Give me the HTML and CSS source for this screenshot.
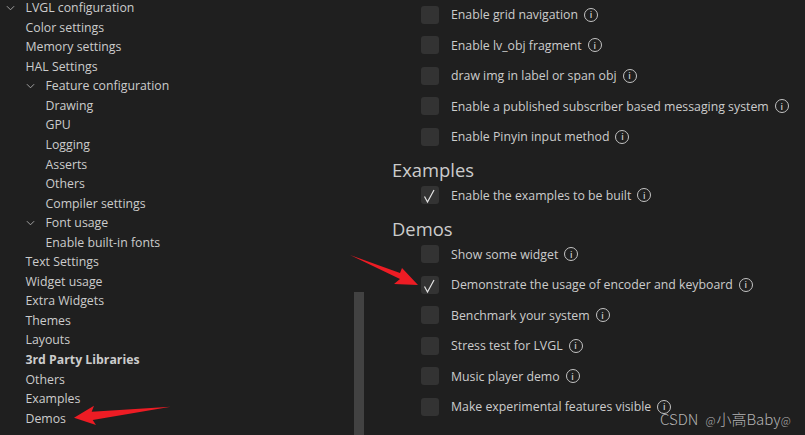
FILE: index.html
```html
<!DOCTYPE html>
<html lang="en">
<head>
    <meta charset="UTF-8">
    <title>LVGL configuration</title>
    <link rel="stylesheet" href="styles.css">
</head>
<body>
    <div class="page">
        <nav class="tree">
            <div class="row lvl1"><svg class="chev" viewBox="0 0 10 6"><path d="M1 1l4 4 4-4"/></svg>LVGL configuration</div>
            <div class="row lvl1">Color settings</div>
            <div class="row lvl1">Memory settings</div>
            <div class="row lvl1">HAL Settings</div>
            <div class="row lvl2"><svg class="chev" viewBox="0 0 10 6"><path d="M1 1l4 4 4-4"/></svg>Feature configuration</div>
            <div class="row lvl2">Drawing</div>
            <div class="row lvl2">GPU</div>
            <div class="row lvl2">Logging</div>
            <div class="row lvl2">Asserts</div>
            <div class="row lvl2">Others</div>
            <div class="row lvl2">Compiler settings</div>
            <div class="row lvl2"><svg class="chev" viewBox="0 0 10 6"><path d="M1 1l4 4 4-4"/></svg>Font usage</div>
            <div class="row lvl2">Enable built-in fonts</div>
            <div class="row lvl1">Text Settings</div>
            <div class="row lvl1">Widget usage</div>
            <div class="row lvl1">Extra Widgets</div>
            <div class="row lvl1">Themes</div>
            <div class="row lvl1">Layouts</div>
            <div class="row lvl1 active">3rd Party Libraries</div>
            <div class="row lvl1">Others</div>
            <div class="row lvl1">Examples</div>
            <div class="row lvl1">Demos</div>
            <div class="scrollbar"></div>
        </nav>
        <main class="settings">
            <div class="option"><span class="box"></span><span>Enable grid navigation</span><span class="info">i</span></div>
            <div class="option"><span class="box"></span><span>Enable lv_obj fragment</span><span class="info">i</span></div>
            <div class="option"><span class="box"></span><span>draw img in label or span obj</span><span class="info">i</span></div>
            <div class="option"><span class="box"></span><span>Enable a published subscriber based messaging system</span><span class="info">i</span></div>
            <div class="option"><span class="box"></span><span>Enable Pinyin input method</span><span class="info">i</span></div>

            <h2 class="first">Examples</h2>
            <div class="option"><span class="box"><svg class="tick" viewBox="0 0 18 18"><path d="M3.500 10.500l3 5.500 6.500-12"/></svg></span><span>Enable the examples to be built</span><span class="info">i</span></div>

            <h2>Demos</h2>
            <div class="option"><span class="box"></span><span>Show some widget</span><span class="info">i</span></div>
            <div class="option"><span class="box"><svg class="tick" viewBox="0 0 18 18"><path d="M3.500 10.500l3 5.500 6.500-12"/></svg></span><span>Demonstrate the usage of encoder and keyboard</span><span class="info">i</span></div>
            <div class="option"><span class="box"></span><span>Benchmark your system</span><span class="info">i</span></div>
            <div class="option"><span class="box"></span><span>Stress test for LVGL</span><span class="info">i</span></div>
            <div class="option"><span class="box"></span><span>Music player demo</span><span class="info">i</span></div>
            <div class="option"><span class="box"></span><span>Make experimental features visible</span><span class="info">i</span></div>
        </main>
    </div>

    <!-- annotations drawn over the screenshot -->
    <svg class="arrow arrow-tree" viewBox="0 0 105 30"><path d="M4 17.700L24 5.700l-2.300 6 79-5-78 13.300 3.300 5z"/></svg>
    <svg class="arrow arrow-demo" viewBox="0 0 100 50"><path d="M5 5l50 18 2-5 16 17-24-1 6-5z"/></svg>
    <div class="watermark">CSDN<span class="wm-small wm-at">@</span>小高Baby<span class="wm-small">@</span></div>
</body>
</html>
```

FILE: styles.css
```css
html, body {
    margin: 0;
    height: 100%;
    overflow: hidden;
    background-color: #1f1f1f;
}

body {
    position: relative;
    color: #cccccc;
    font-family: "Open Sans", "Noto Sans", sans-serif;
    font-size: 12.3px;
}

.page {
    display: flex;
    height: 435px;
}

.tree {
    position: relative;
    width: 392px;
    flex-shrink: 0;
    margin-top: -1.85px;
}

.row {
    position: relative;
    height: 19.55px;
    line-height: 19.55px;
    white-space: nowrap;
}

.lvl1 {
    padding-left: 25.5px;
}

.lvl2 {
    padding-left: 45.5px;
}

.active {
    font-weight: 700;
}

.chev {
    position: absolute;
    top: 7px;
    width: 9px;
    height: 6px;
    margin-left: -20px;
    fill: none;
    stroke: #b0b0b0;
    stroke-width: 1;
}

.scrollbar {
    position: absolute;
    left: 354px;
    top: 294px;
    width: 10px;
    height: 145px;
    background-color: #424242;
}

.settings {
    margin-top: -0.4px;
}

.option {
    display: flex;
    align-items: center;
    height: 30.5px;
    padding-left: 29px;
    white-space: nowrap;
}

.box {
    display: flex;
    width: 18px;
    height: 18px;
    margin-right: 12px;
    flex-shrink: 0;
    border-radius: 3px;
    background-color: #333333;
}

.tick {
    width: 18px;
    height: 18px;
    fill: none;
    stroke: #e4e4e4;
    stroke-width: 1.2;
}

.info {
    display: flex;
    align-items: center;
    justify-content: center;
    width: 12px;
    height: 12px;
    margin-left: 6px;
    border: 1px solid #c4c4c4;
    border-radius: 50%;
    font-size: 9px;
    line-height: 1;
    font-weight: 600;
}

h2 {
    margin: 0;
    padding: 10px 0 0;
    height: 18.3px;
    line-height: 18.4px;
    font-size: 18.4px;
    font-weight: 400;
}

h2.first {
    padding: 9.2px 0 0.4px;
}

.arrow {
    position: absolute;
    fill: #ed1c24;
}

.arrow-tree {
    left: 70px;
    top: 400px;
    width: 105px;
    height: 30px;
}

.arrow-demo {
    left: 345px;
    top: 250px;
    width: 100px;
    height: 50px;
}

.watermark {
    position: absolute;
    left: 660px;
    top: 408px;
    color: #b4b4b4;
    font-family: "Noto Sans CJK SC", "Liberation Sans", sans-serif;
    font-weight: 300;
    font-size: 15px;
    white-space: nowrap;
}

.wm-small {
    font-size: 11px;
}

.wm-at {
    margin: 0 1px 0 7px;
}
```
